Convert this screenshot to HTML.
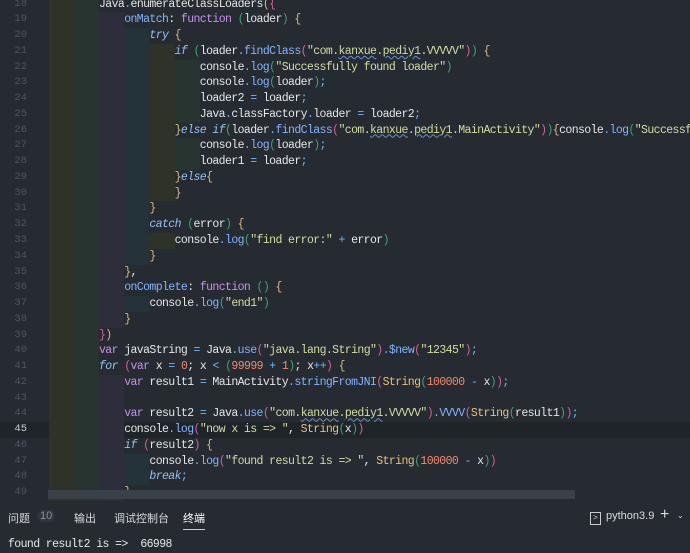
<!DOCTYPE html>
<html><head><meta charset="utf-8"><style>
body{margin:0;width:690px;height:553px;background:#252b31;overflow:hidden;position:relative;font-family:"Liberation Mono",monospace;}
.ed{position:absolute;left:0;top:-3.5px;width:690px;}
.l{height:15.77px;line-height:15.77px;font-size:11.5px;letter-spacing:-0.6px;color:#e4e6e8;white-space:pre;position:relative;}
.n{position:absolute;left:0;width:27px;text-align:right;color:#4b5661;letter-spacing:0;font-size:10.5px;}
.c{position:absolute;left:48.6px;}
.g{display:inline-block;height:15.77px;vertical-align:top;background:linear-gradient(90deg,#2e3229 0,#2e3229 25.2px,#283430 25.2px,#283430 50.4px,#2e2d3b 50.4px,#2e2d3b 75.6px,#243239 75.6px,#243239 100.8px,#2e3229 100.8px,#2e3229 126px,#283430 126px,#283430 151.2px);}
.cur{background:#1f2429;}
.cur .n{color:#c8ccd0;}
.k{color:#c792ea}.i{color:#8fc1f0;font-style:italic}.s{color:#d3dca0}.p{color:#6cb6ff}.num{color:#f28b6a}.t{color:#e6c07b}
.y{color:#d7ba7d}.m{color:#d35fa0}.gr{color:#3aa675}.f{color:#82b4ff}
.w{text-decoration:underline wavy #6b8fd0;text-decoration-thickness:1px;}
.sb{position:absolute;left:48px;top:490px;width:527px;height:9px;background:#3a4148;}
.tabs{position:absolute;top:510px;left:0;width:690px;font-family:"Liberation Sans","Noto Sans CJK SC",sans-serif;font-size:11px;color:#d8dadc;}
.tabs span{position:absolute;top:0;}
.out{position:absolute;left:8px;top:538px;font-size:11.5px;letter-spacing:-0.6px;color:#e4e6e8;white-space:pre;}
</style></head><body>
<div class="ed">
<div class="l"><span class="n">18</span><span class="c"><span class="g" style="width:50.4px"></span>Java<span class="p">.</span>enumerateClassLoaders<span class="y">(</span><span class="m">{</span></span></div>
<div class="l"><span class="n">19</span><span class="c"><span class="g" style="width:75.6px"></span><span class="f">onMatch</span>: <span class="k">function</span> <span class="gr">(</span>loader<span class="gr">)</span> <span class="y">{</span></span></div>
<div class="l"><span class="n">20</span><span class="c"><span class="g" style="width:100.8px"></span><span class="i">try</span> <span class="y">{</span></span></div>
<div class="l"><span class="n">21</span><span class="c"><span class="g" style="width:126px"></span><span class="i">if</span> <span class="gr">(</span>loader<span class="p">.</span><span class="f">findClass</span><span class="m">(</span><span class="s">"com.<span class="w">kanxue</span>.<span class="w">pediy1</span>.VVVVV"</span><span class="m">)</span><span class="gr">)</span> <span class="y">{</span></span></div>
<div class="l"><span class="n">22</span><span class="c"><span class="g" style="width:151.2px"></span>console<span class="p">.</span><span class="f">log</span><span class="gr">(</span><span class="s">"Successfully found loader"</span><span class="gr">)</span></span></div>
<div class="l"><span class="n">23</span><span class="c"><span class="g" style="width:151.2px"></span>console<span class="p">.</span><span class="f">log</span><span class="gr">(</span>loader<span class="gr">)</span><span class="p">;</span></span></div>
<div class="l"><span class="n">24</span><span class="c"><span class="g" style="width:151.2px"></span>loader2 <span class="p">=</span> loader<span class="p">;</span></span></div>
<div class="l"><span class="n">25</span><span class="c"><span class="g" style="width:151.2px"></span>Java<span class="p">.</span>classFactory<span class="p">.</span>loader <span class="p">=</span> loader2<span class="p">;</span></span></div>
<div class="l"><span class="n">26</span><span class="c"><span class="g" style="width:126px"></span><span class="y">}</span><span class="i">else if</span><span class="gr">(</span>loader<span class="p">.</span><span class="f">findClass</span><span class="m">(</span><span class="s">"com.<span class="w">kanxue</span>.<span class="w">pediy1</span>.MainActivity"</span><span class="m">)</span><span class="gr">)</span><span class="y">{</span>console<span class="p">.</span><span class="f">log</span><span class="gr">(</span><span class="s">"Successful</span></span></div>
<div class="l"><span class="n">27</span><span class="c"><span class="g" style="width:151.2px"></span>console<span class="p">.</span><span class="f">log</span><span class="gr">(</span>loader<span class="gr">)</span><span class="p">;</span></span></div>
<div class="l"><span class="n">28</span><span class="c"><span class="g" style="width:151.2px"></span>loader1 <span class="p">=</span> loader<span class="p">;</span></span></div>
<div class="l"><span class="n">29</span><span class="c"><span class="g" style="width:126px"></span><span class="y">}</span><span class="i">else</span><span class="y">{</span></span></div>
<div class="l"><span class="n">30</span><span class="c"><span class="g" style="width:126px"></span><span class="y">}</span></span></div>
<div class="l"><span class="n">31</span><span class="c"><span class="g" style="width:100.8px"></span><span class="y">}</span></span></div>
<div class="l"><span class="n">32</span><span class="c"><span class="g" style="width:100.8px"></span><span class="i">catch</span> <span class="gr">(</span>error<span class="gr">)</span> <span class="y">{</span></span></div>
<div class="l"><span class="n">33</span><span class="c"><span class="g" style="width:126px"></span>console<span class="p">.</span><span class="f">log</span><span class="gr">(</span><span class="s">"find error:"</span> <span class="p">+</span> error<span class="gr">)</span></span></div>
<div class="l"><span class="n">34</span><span class="c"><span class="g" style="width:100.8px"></span><span class="y">}</span></span></div>
<div class="l"><span class="n">35</span><span class="c"><span class="g" style="width:75.6px"></span><span class="y">}</span>,</span></div>
<div class="l"><span class="n">36</span><span class="c"><span class="g" style="width:75.6px"></span><span class="f">onComplete</span>: <span class="k">function</span> <span class="gr">()</span> <span class="y">{</span></span></div>
<div class="l"><span class="n">37</span><span class="c"><span class="g" style="width:100.8px"></span>console<span class="p">.</span><span class="f">log</span><span class="gr">(</span><span class="s">"end1"</span><span class="gr">)</span></span></div>
<div class="l"><span class="n">38</span><span class="c"><span class="g" style="width:75.6px"></span><span class="y">}</span></span></div>
<div class="l"><span class="n">39</span><span class="c"><span class="g" style="width:50.4px"></span><span class="m">}</span><span class="y">)</span></span></div>
<div class="l"><span class="n">40</span><span class="c"><span class="g" style="width:50.4px"></span><span class="k">var</span> javaString <span class="p">=</span> Java<span class="p">.</span><span class="f">use</span><span class="m">(</span><span class="s">"java.lang.String"</span><span class="m">)</span><span class="p">.</span><span class="f">$new</span><span class="m">(</span><span class="s">"12345"</span><span class="m">)</span><span class="p">;</span></span></div>
<div class="l"><span class="n">41</span><span class="c"><span class="g" style="width:50.4px"></span><span class="i">for</span> <span class="m">(</span><span class="k">var</span> x <span class="p">=</span> <span class="num">0</span>; x <span class="p">&lt;</span> <span class="gr">(</span><span class="num">99999</span> <span class="p">+</span> <span class="num">1</span><span class="gr">)</span>; x<span class="p">++</span><span class="m">)</span> <span class="y">{</span></span></div>
<div class="l"><span class="n">42</span><span class="c"><span class="g" style="width:75.6px"></span><span class="k">var</span> result1 <span class="p">=</span> MainActivity<span class="p">.</span><span class="f">stringFromJNI</span><span class="m">(</span><span class="t">String</span><span class="gr">(</span><span class="num">100000</span> <span class="p">-</span> x<span class="gr">)</span><span class="m">)</span><span class="p">;</span></span></div>
<div class="l"><span class="n">43</span><span class="c"><span class="g" style="width:75.6px"></span></span></div>
<div class="l"><span class="n">44</span><span class="c"><span class="g" style="width:75.6px"></span><span class="k">var</span> result2 <span class="p">=</span> Java<span class="p">.</span><span class="f">use</span><span class="m">(</span><span class="s">"com.<span class="w">kanxue</span>.<span class="w">pediy1</span>.VVVVV"</span><span class="m">)</span><span class="p">.</span><span class="f">VVVV</span><span class="m">(</span><span class="t">String</span><span class="gr">(</span>result1<span class="gr">)</span><span class="m">)</span><span class="p">;</span></span></div>
<div class="l cur"><span class="n">45</span><span class="c"><span class="g" style="width:75.6px"></span>console<span class="p">.</span><span class="f">log</span><span class="m">(</span><span class="s">"now x is =&gt; "</span>, <span class="t">String</span><span class="gr">(</span>x<span class="gr">)</span><span class="m">)</span></span></div>
<div class="l"><span class="n">46</span><span class="c"><span class="g" style="width:75.6px"></span><span class="i">if</span> <span class="m">(</span>result2<span class="m">)</span> <span class="y">{</span></span></div>
<div class="l"><span class="n">47</span><span class="c"><span class="g" style="width:100.8px"></span>console<span class="p">.</span><span class="f">log</span><span class="m">(</span><span class="s">"found result2 is =&gt; "</span>, <span class="t">String</span><span class="gr">(</span><span class="num">100000</span> <span class="p">-</span> x<span class="gr">)</span><span class="m">)</span></span></div>
<div class="l"><span class="n">48</span><span class="c"><span class="g" style="width:100.8px"></span><span class="i">break</span><span class="p">;</span></span></div>
<div class="l"><span class="n">49</span><span class="c"><span class="g" style="width:75.6px"></span><span class="y">}</span></span></div>
</div>
<div class="sb"></div>
<div class="tabs">
<span style="left:8px">问题</span>
<span style="left:37px;background:#2f363d;color:#8a9096;padding:0 3px;border-radius:6px">10</span>
<span style="left:74px">输出</span>
<span style="left:114px">调试控制台</span>
<span style="left:183px;color:#fff;border-bottom:1px solid #c8ccd0;padding-bottom:3px">终端</span>
<span style="left:590px;border:1px solid #c8ccd0;width:9px;height:11px;line-height:10px;text-align:center;font-size:8px;top:2px">&gt;</span>
<span style="left:606px">python3.9</span>
<span style="left:660px;font-size:16px;top:-4px">+</span>
<span style="left:677px;font-size:8px;top:1px">⌄</span>
</div>
<div class="out">found result2 is =&gt;  66998</div>
</body></html>
